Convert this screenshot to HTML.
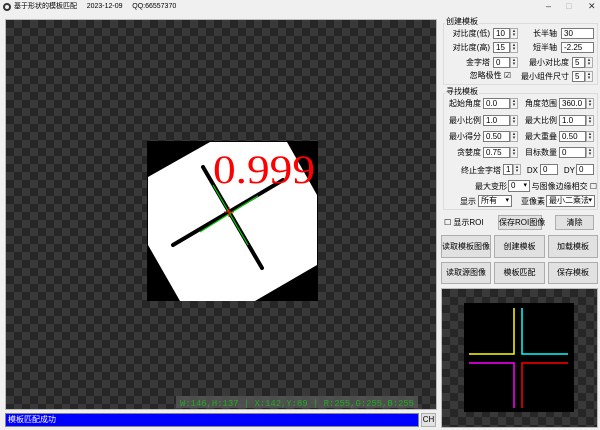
<!DOCTYPE html>
<html><head><meta charset="utf-8"><style>
*{margin:0;padding:0;box-sizing:border-box}
body{width:600px;height:430px;background:#f0f0f0;font-family:"Liberation Sans","Noto Sans CJK SC",sans-serif;font-size:8px;color:#000;position:relative;overflow:hidden}
.a{position:absolute}
.chk{background-color:#262626;background-image:linear-gradient(45deg,#393939 25%,transparent 25%,transparent 75%,#393939 75%),linear-gradient(45deg,#393939 25%,transparent 25%,transparent 75%,#393939 75%);background-size:16px 16px;background-position:0 0,8px 8px}
.lb{position:absolute;text-align:right;white-space:nowrap;font-size:8px;line-height:11px}
.in{position:absolute;background:#fff;border:1px solid #7a7a7a;height:11px;font-size:8px;line-height:9px;padding-left:2px;white-space:nowrap;overflow:hidden}
.sp{position:absolute;background:#f4f4f4;border:1px solid #adadad;height:11px;width:8px;font-size:5px;line-height:4px;text-align:center;color:#333}
.btn{position:absolute;background:#e1e1e1;border:1px solid #adadad;text-align:center;font-size:8px;white-space:nowrap}
.gb{position:absolute;border:1px solid #dcdcdc}
.gt{position:absolute;background:#f0f0f0;font-size:8px;padding:0 1px;line-height:10px}
.dd{position:absolute;background:#fff;border:1px solid #7a7a7a;height:12px;font-size:8px;line-height:10px;padding-left:2px;white-space:nowrap}
.dd:after{content:"▾";position:absolute;right:2px;top:0;font-size:7px}
</style></head><body>
<div class="a" style="left:3px;top:3px;width:8px;height:8px;border:2px solid #333;border-radius:50%"></div>
<div class="a" style="left:14px;top:2px;font-size:7px;line-height:10px;white-space:nowrap">基于形状的模板匹配 &nbsp;&nbsp;&nbsp; 2023-12-09 &nbsp;&nbsp;&nbsp; QQ:66557370</div>
<div class="a" style="left:546px;top:1px;font-size:9px;color:#333">–</div>
<div class="a" style="left:566px;top:1px;font-size:9px;color:#aaa">□</div>
<div class="a" style="left:588px;top:1px;font-size:9px;color:#333">✕</div>

<div class="a chk" style="left:5px;top:19px;width:432px;height:391px;border:1px solid #bbb"></div>
<svg class="a" style="left:0;top:0" width="440" height="412">
<rect x="147" y="141" width="171" height="160" fill="#000"/>
<polygon points="210,142 287,142 317,195 317,265 255,301 180,301 148,245 148,177" fill="#fff"/>
<line x1="203" y1="167" x2="262" y2="268" stroke="#000" stroke-width="4" stroke-linecap="round"/>
<line x1="173" y1="245" x2="283" y2="180" stroke="#000" stroke-width="4" stroke-linecap="round"/>
<line x1="213" y1="185" x2="248" y2="245" stroke="#0c0" stroke-width="1.2"/>
<line x1="200" y1="232" x2="258" y2="196" stroke="#0c0" stroke-width="1.2"/>
<path d="M224 212h10M229 207v10" stroke="#f00" stroke-width="1"/>
<text x="213" y="183" fill="#f00" font-family="Liberation Serif,serif" font-size="40" textLength="102" lengthAdjust="spacingAndGlyphs">0.999</text>
<rect x="176" y="396" width="242" height="12" fill="#555" opacity="0.85"/>
<text x="180" y="406" fill="#22aa22" font-family="Liberation Mono,monospace" font-size="9" textLength="234" lengthAdjust="spacingAndGlyphs">W:146,H:137 | X:142,Y:89 | R:255,G:255,B:255</text>
</svg>
<div class="a" style="left:5px;top:413px;width:414px;height:14px;background:#0000ff;color:#fff;font-size:8px;line-height:12px;padding-left:2px;border:1px solid #888">模板匹配成功</div>
<div class="btn" style="left:421px;top:413px;width:15px;height:14px;line-height:12px;font-size:8px">CH</div>

<div class="gb" style="left:443px;top:23px;width:155px;height:62px"></div>
<div class="gt" style="left:445px;top:17px">创建模板</div>
<div class="lb" style="right:110px;top:28px">对比度(低)</div><div class="in" style="left:493px;top:28px;width:17px">10</div><div class="sp" style="left:510px;top:28px">▴<br>▾</div>
<div class="lb" style="right:43px;top:28px">长半轴</div><div class="in" style="left:561px;top:28px;width:33px">30</div>
<div class="lb" style="right:110px;top:42px">对比度(高)</div><div class="in" style="left:493px;top:42px;width:17px">15</div><div class="sp" style="left:510px;top:42px">▴<br>▾</div>
<div class="lb" style="right:43px;top:42px">短半轴</div><div class="in" style="left:561px;top:42px;width:33px">-2.25</div>
<div class="lb" style="right:110px;top:57px">金字塔</div><div class="in" style="left:493px;top:57px;width:17px">0</div><div class="sp" style="left:510px;top:57px">▴<br>▾</div>
<div class="lb" style="right:31px;top:57px">最小对比度</div><div class="in" style="left:572px;top:57px;width:13px">5</div><div class="sp" style="left:585px;top:57px">▴<br>▾</div>
<div class="lb" style="right:89px;top:70px">忽略极性 ☑</div>
<div class="lb" style="right:31px;top:71px">最小组件尺寸</div><div class="in" style="left:572px;top:71px;width:13px">5</div><div class="sp" style="left:585px;top:71px">▴<br>▾</div>

<div class="gb" style="left:443px;top:93px;width:155px;height:117px"></div>
<div class="gt" style="left:445px;top:87px">寻找模板</div>
<div class="lb" style="right:119px;top:98px">起始角度</div><div class="in" style="left:483px;top:98px;width:27px">0.0</div><div class="sp" style="left:510px;top:98px">▴<br>▾</div>
<div class="lb" style="right:43px;top:98px">角度范围</div><div class="in" style="left:559px;top:98px;width:27px">360.0</div><div class="sp" style="left:586px;top:98px">▴<br>▾</div>
<div class="lb" style="right:119px;top:115px">最小比例</div><div class="in" style="left:483px;top:115px;width:27px">1.0</div><div class="sp" style="left:510px;top:115px">▴<br>▾</div>
<div class="lb" style="right:43px;top:115px">最大比例</div><div class="in" style="left:559px;top:115px;width:27px">1.0</div><div class="sp" style="left:586px;top:115px">▴<br>▾</div>
<div class="lb" style="right:119px;top:131px">最小得分</div><div class="in" style="left:483px;top:131px;width:27px">0.50</div><div class="sp" style="left:510px;top:131px">▴<br>▾</div>
<div class="lb" style="right:43px;top:131px">最大重叠</div><div class="in" style="left:559px;top:131px;width:27px">0.50</div><div class="sp" style="left:586px;top:131px">▴<br>▾</div>
<div class="lb" style="right:119px;top:147px">贪婪度</div><div class="in" style="left:483px;top:147px;width:27px">0.75</div><div class="sp" style="left:510px;top:147px">▴<br>▾</div>
<div class="lb" style="right:43px;top:147px">目标数量</div><div class="in" style="left:559px;top:147px;width:27px">0</div><div class="sp" style="left:586px;top:147px">▴<br>▾</div>
<div class="lb" style="right:99px;top:165px">终止金字塔</div><div class="in" style="left:503px;top:164px;width:10px">1</div><div class="sp" style="left:513px;top:164px">▴<br>▾</div>
<div class="lb" style="right:62px;top:165px">DX</div><div class="in" style="left:540px;top:164px;width:18px">0</div>
<div class="lb" style="right:25px;top:165px">DY</div><div class="in" style="left:576px;top:164px;width:18px">0</div>
<div class="lb" style="right:93px;top:181px">最大变形</div><div class="dd" style="left:508px;top:180px;width:22px">0</div>
<div class="lb" style="right:3px;top:181px">与图像边缘相交 ☐</div>
<div class="lb" style="right:124px;top:196px">显示</div><div class="dd" style="left:478px;top:195px;width:34px">所有</div>
<div class="lb" style="right:55px;top:196px">亚像素</div><div class="dd" style="left:546px;top:195px;width:49px">最小二乘法</div>

<div class="lb" style="left:444px;top:217px;text-align:left">☐ 显示ROI</div>
<div class="btn" style="left:498px;top:215px;width:44px;height:15px;line-height:13px">保存ROI图像</div>
<div class="btn" style="left:555px;top:215px;width:39px;height:15px;line-height:13px">清除</div>

<div class="btn" style="left:441px;top:235px;width:50px;height:23px;line-height:21px">读取模板图像</div>
<div class="btn" style="left:494px;top:235px;width:51px;height:23px;line-height:21px">创建模板</div>
<div class="btn" style="left:548px;top:235px;width:50px;height:23px;line-height:21px">加载模板</div>
<div class="btn" style="left:441px;top:262px;width:50px;height:22px;line-height:20px">读取源图像</div>
<div class="btn" style="left:494px;top:262px;width:51px;height:22px;line-height:20px">模板匹配</div>
<div class="btn" style="left:548px;top:262px;width:50px;height:22px;line-height:20px">保存模板</div>

<div class="a chk" style="left:441px;top:288px;width:157px;height:140px;border:1px solid #bbb"></div>
<svg class="a" style="left:0;top:0" width="600" height="430">
<rect x="464" y="303" width="110" height="109" fill="#000"/>
<path d="M514 308V354H469" stroke="#ff0" stroke-width="1.5" fill="none"/>
<path d="M522 308V354H568" stroke="#0ff" stroke-width="1.5" fill="none"/>
<path d="M469 363H514V408" stroke="#f0f" stroke-width="1.5" fill="none"/>
<path d="M568 363H522V408" stroke="#f00" stroke-width="1.5" fill="none"/>
</svg>
</body></html>
